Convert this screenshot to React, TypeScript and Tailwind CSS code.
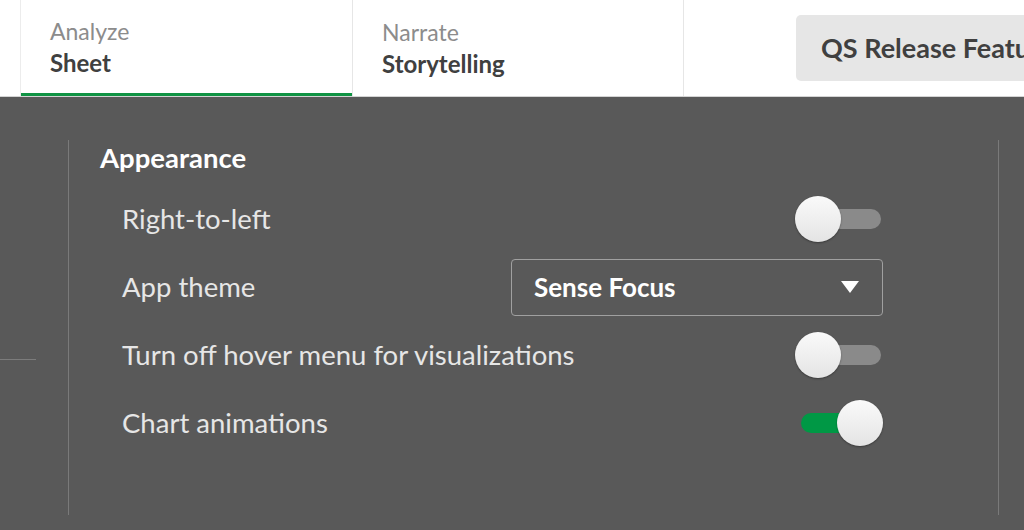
import React from "react";

const font = { fontFamily: '"Lato", "Noto Sans", sans-serif' };

function Toggle({ on }: { on: boolean }) {
  return (
    <div className="relative h-[46px] w-[88px] shrink-0">
      <div
        className={`absolute left-[6px] right-[2px] top-[13px] h-[20px] rounded-full ${
          on ? "bg-[#009845]" : "bg-[#8a8a8a]"
        }`}
      />
      <div
        className={`absolute top-0 h-[46px] w-[46px] rounded-full bg-gradient-to-b from-[#fafafa] to-[#e4e4e4] shadow-[0_1px_2px_rgba(0,0,0,0.35)] ${
          on ? "right-0" : "left-0"
        }`}
      />
    </div>
  );
}

function Row({ label, children }: { label: string; children: React.ReactNode }) {
  return (
    <div className="flex h-[68px] items-center justify-between">
      <span className="whitespace-nowrap text-[27.5px] text-[#e6e6e6]">{label}</span>
      {children}
    </div>
  );
}

export default function App() {
  return (
    <div className="flex h-[530px] w-[1024px] flex-col overflow-hidden" style={font}>
      {/* Top tabs */}
      <div className="flex h-[97px] shrink-0 border-b border-[#d4d4d4] bg-white">
        <div className="w-[21px] shrink-0 border-r border-[#ececec]" />
        <div className="flex w-[331px] shrink-0 flex-col justify-center border-b-[3px] border-[#109344] pl-[29px] pt-[2px]">
          <span className="text-[23px] leading-[30px] text-[#8c8c8c]">Analyze</span>
          <span className="text-[24px] font-bold leading-[34px] text-[#404040]">Sheet</span>
        </div>
        <div className="flex w-[332px] shrink-0 flex-col justify-center border-l border-r border-[#e6e6e6] pl-[29px] pt-[2px]">
          <span className="text-[23px] leading-[30px] text-[#8c8c8c]">Narrate</span>
          <span className="text-[24px] font-bold leading-[34px] text-[#404040]">Storytelling</span>
        </div>
        <div className="flex min-w-0 flex-1 items-center pl-[112px]">
          <div className="flex h-[66px] w-[320px] shrink-0 items-center rounded-[5px] bg-[#e6e6e6] pl-[25px]">
            <span className="whitespace-nowrap text-[27px] font-bold text-[#404040]">
              QS Release Features
            </span>
          </div>
        </div>
      </div>

      {/* Body */}
      <div className="flex flex-1 bg-[#595959]">
        <div className="w-[68px] shrink-0">
          <div className="mt-[262px] h-px w-[36px] bg-[#7c7c7c]" />
        </div>
        <div className="mb-[15px] mt-[43px] flex-1 border-l border-r border-[#7a7a7a] pl-[31px] pr-[115px] pt-[3px]">
          <div className="text-[27.5px] font-bold leading-[30px] text-white">Appearance</div>
          <div className="mt-[12px] pl-[22px]">
            <Row label="Right-to-left">
              <Toggle on={false} />
            </Row>
            <Row label="App theme">
              <div className="flex h-[57px] w-[372px] items-center justify-between rounded-[4px] border border-[#a0a0a0] pl-[22px] pr-[22px]">
                <span className="text-[26px] font-bold text-white">Sense Focus</span>
                <svg width="20" height="14" viewBox="0 0 20 14">
                  <polygon points="1,1 19,1 10,13" fill="#ffffff" />
                </svg>
              </div>
            </Row>
            <Row label="Turn off hover menu for visualizations">
              <Toggle on={false} />
            </Row>
            <Row label="Chart animations">
              <Toggle on={true} />
            </Row>
          </div>
        </div>
        <div className="w-[25px] shrink-0" />
      </div>
    </div>
  );
}
